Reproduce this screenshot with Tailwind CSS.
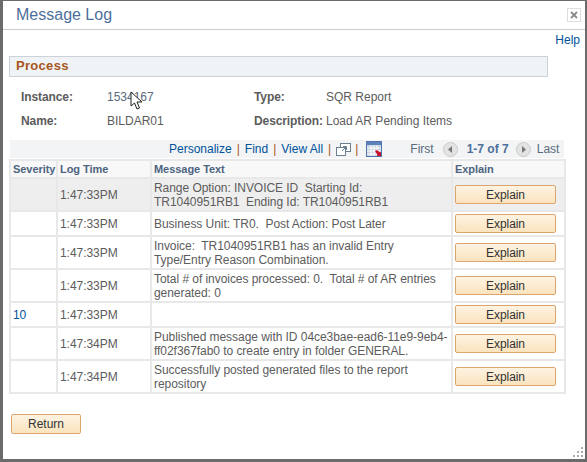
<!DOCTYPE html>
<html lang="en">
<head>
  <meta charset="UTF-8" />
  <title>Message Log</title>
  <script src="https://cdn.jsdelivr.net/npm/@tailwindcss/browser@4"></script>
</head>
<body class="bg-[#6b6b6b] font-['Liberation_Sans',Arial,sans-serif] text-[12px] text-[#5c5c5c]">
  <div class="relative ml-[3px] mt-px w-[582px] h-[458px] bg-white overflow-hidden">

    <!-- Title bar -->
    <div class="flex items-center justify-between h-[29px] border-b border-[#ccc] pl-[13px] pr-[4px]">
      <span class="text-[16px] text-[#4d6f9c]">Message Log</span>
      <span class="flex items-center justify-center w-[14px] h-[14px] border border-[#ddd] text-[#888]">
        <svg width="8" height="8" viewBox="0 0 8 8"><path d="M1 1l6 6M7 1l-6 6" stroke="#8a8a8a" stroke-width="1.8" /></svg>
      </span>
    </div>

    <!-- Help -->
    <div class="flex justify-end h-[26px] pt-[3px] pr-[5px] leading-[14px] text-[#00529b]">Help</div>

    <!-- Process header -->
    <div class="ml-[6px] w-[539px] h-[21px] border border-[#ccd2d8] bg-[#f0f3f5] pl-[6px] leading-[18px] text-[13px] tracking-[0.3px] font-bold text-[#a8551e]">Process</div>

    <!-- Process details -->
    <div class="grid grid-cols-[86px_147px_72px_1fr] gap-y-[10px] ml-[18px] mt-[13px] leading-[14px]">
      <span class="font-bold tracking-[-0.1px]">Instance:</span><span class="text-[#5a6b7d]">1534167</span>
      <span class="font-bold tracking-[-0.1px]">Type:</span><span>SQR Report</span>
      <span class="font-bold tracking-[-0.1px]">Name:</span><span>BILDAR01</span>
      <span class="font-bold tracking-[-0.1px]">Description:</span><span>Load AR Pending Items</span>
    </div>

    <!-- Grid toolbar -->
    <div class="flex items-center ml-[7px] mt-[12px] w-[554px] h-[18px] bg-[#f2f4f5] text-[#00529b] whitespace-nowrap">
      <div class="flex items-center ml-[159px]">
        <span>Personalize</span><span class="mx-[5px] text-[#a8551e]">|</span>
        <span>Find</span><span class="mx-[5px] text-[#a8551e]">|</span>
        <span>View All</span><span class="mx-[5px] text-[#a8551e]">|</span>
        <svg class="shrink-0" width="15" height="13" viewBox="0 0 15 13" fill="none">
          <rect x="4.5" y="0.5" width="10" height="8" fill="#fff" stroke="#6d7f92" />
          <rect x="0.5" y="4.5" width="9" height="8" fill="#fff" stroke="#6d7f92" />
          <path d="M6 8l4-4M7 3.5h3.5V7" stroke="#6d7f92" />
        </svg>
        <span class="ml-[4px] mr-[8px] text-[#a8551e]">|</span>
        <svg class="shrink-0" width="16" height="16" viewBox="0 0 16 16">
          <rect x="0.5" y="0.5" width="15" height="15" fill="#c9d2e0" stroke="#4f74ae" />
          <path d="M1 7h14M1 10h14M1 13h14M5 4v11M8 4v11M11 4v11" stroke="#fff" />
          <rect x="1" y="1" width="14" height="3" fill="#5c82bb" />
          <path d="M9 10l2-1 3 2.500 1-1v4.500h-4.500l1-1z" fill="#c8102e" />
        </svg>
      </div>
      <div class="flex items-center ml-[28px]">
        <span class="text-[#5a6b7d]">First</span>
        <span class="flex shrink-0 items-center justify-center ml-[9px] w-[15px] h-[15px] rounded-full bg-[#e3e3e3] border border-[#ccc]">
          <svg width="5" height="7" viewBox="0 0 5 7"><path d="M4 0v7L0 3.5z" fill="#777" /></svg>
        </span>
        <span class="ml-[9px] font-bold text-[#4d6f9c]">1-7 of 7</span>
        <span class="flex shrink-0 items-center justify-center ml-[7px] w-[15px] h-[15px] rounded-full bg-[#e3e3e3] border border-[#ccc]">
          <svg width="5" height="7" viewBox="0 0 5 7"><path d="M1 0v7l4-3.5z" fill="#777" /></svg>
        </span>
        <span class="ml-[6px] text-[#5a6b7d]">Last</span>
      </div>
    </div>

    <!-- Message table -->
    <table class="ml-[6px] mt-[1px] w-[555px] table-fixed border-collapse leading-[14px] tracking-[-0.05px] [&_td]:border-2 [&_td]:border-[#e8e8e8] [&_td]:pl-[2px] [&_td]:pr-0 [&_th]:border-2 [&_th]:border-[#e8e8e8] [&_th]:pl-[2px] [&_th]:pr-0">
      <colgroup>
        <col class="w-[47px]" /><col class="w-[94px]" /><col class="w-[301px]" /><col class="w-[113px]" />
      </colgroup>
      <thead>
        <tr class="h-[18px] bg-[#f8f8f8] text-left text-[11px] text-[#4d6480]">
          <th class="font-bold">Severity</th><th class="font-bold">Log Time</th><th class="font-bold">Message Text</th><th class="font-bold">Explain</th>
        </tr>
      </thead>
      <tbody>
        <tr class="h-[33px] bg-[#eeeeee]">
          <td></td><td>1:47:33PM</td>
          <td class="whitespace-pre-wrap pt-px">Range Option: INVOICE ID  Starting Id:<br />TR1040951RB1  Ending Id: TR1040951RB1</td>
          <td><button class="block w-[101px] h-[19px] rounded-[2px] border border-[#dca56f] bg-gradient-to-b from-[#fdf3e3] to-[#fbe3bd] text-[#333]">Explain</button></td>
        </tr>
        <tr class="h-[25px]">
          <td></td><td>1:47:33PM</td>
          <td class="whitespace-pre-wrap">Business Unit: TR0.  Post Action: Post Later</td>
          <td><button class="block w-[101px] h-[19px] rounded-[2px] border border-[#dca56f] bg-gradient-to-b from-[#fdf3e3] to-[#fbe3bd] text-[#333]">Explain</button></td>
        </tr>
        <tr class="h-[33px]">
          <td></td><td>1:47:33PM</td>
          <td class="whitespace-pre-wrap">Invoice:  TR1040951RB1 has an invalid Entry Type/Entry Reason Combination.</td>
          <td><button class="block w-[101px] h-[19px] rounded-[2px] border border-[#dca56f] bg-gradient-to-b from-[#fdf3e3] to-[#fbe3bd] text-[#333]">Explain</button></td>
        </tr>
        <tr class="h-[33px]">
          <td></td><td>1:47:33PM</td>
          <td class="whitespace-pre-wrap">Total # of invoices processed: 0.  Total # of AR entries generated: 0</td>
          <td><button class="block w-[101px] h-[19px] rounded-[2px] border border-[#dca56f] bg-gradient-to-b from-[#fdf3e3] to-[#fbe3bd] text-[#333]">Explain</button></td>
        </tr>
        <tr class="h-[25px]">
          <td class="text-[#00529b]">10</td><td>1:47:33PM</td>
          <td></td>
          <td><button class="block w-[101px] h-[19px] rounded-[2px] border border-[#dca56f] bg-gradient-to-b from-[#fdf3e3] to-[#fbe3bd] text-[#333]">Explain</button></td>
        </tr>
        <tr class="h-[33px]">
          <td></td><td>1:47:34PM</td>
          <td>Published message with ID 04ce3bae-ead6-11e9-9eb4-ff02f367fab0 to create entry in folder GENERAL.</td>
          <td><button class="block w-[101px] h-[19px] rounded-[2px] border border-[#dca56f] bg-gradient-to-b from-[#fdf3e3] to-[#fbe3bd] text-[#333]">Explain</button></td>
        </tr>
        <tr class="h-[33px]">
          <td></td><td>1:47:34PM</td>
          <td>Successfully posted generated files to the report repository</td>
          <td><button class="block w-[101px] h-[19px] rounded-[2px] border border-[#dca56f] bg-gradient-to-b from-[#fdf3e3] to-[#fbe3bd] text-[#333]">Explain</button></td>
        </tr>
      </tbody>
    </table>

    <button class="block ml-[8px] mt-[20px] w-[70px] h-[20px] rounded-[2px] border border-[#dca56f] bg-gradient-to-b from-[#fdf3e3] to-[#fbe3bd] text-[#333]">Return</button>

    <!-- Resize grip -->
    <svg class="absolute right-[1px] bottom-[1px]" width="11" height="11" viewBox="0 0 11 11" fill="#aaa">
      <rect x="8" y="0" width="2" height="2" /><rect x="4" y="4" width="2" height="2" /><rect x="8" y="4" width="2" height="2" />
      <rect x="0" y="8" width="2" height="2" /><rect x="4" y="8" width="2" height="2" /><rect x="8" y="8" width="2" height="2" />
    </svg>

    <!-- Mouse pointer -->
    <svg class="absolute left-[127px] top-[90px]" width="14" height="20" viewBox="0 0 14 20">
      <path d="M1 1v14l3.500-3 2.500 6 2.500-1-2.500-6h5z" fill="#fff" stroke="#222" stroke-width="1" />
    </svg>
  </div>
</body>
</html>
